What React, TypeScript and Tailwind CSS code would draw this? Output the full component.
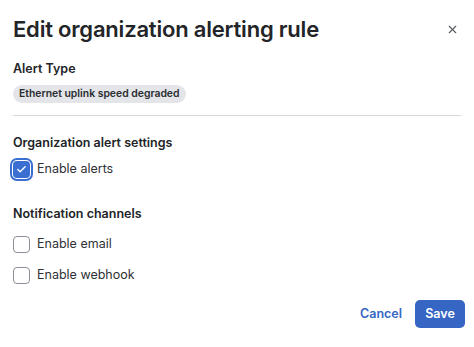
import { Check, X } from 'lucide-react';

const Box = ({ checked, label }: { checked?: boolean; label: string }) => (
  <label className="flex items-center gap-[7px] h-[20px]">
    {checked ? (
      <span className="w-[17px] h-[17px] rounded-[4px] bg-[#3a6fd1] flex items-center justify-center ring-2 ring-[#3a6fd1] ring-offset-1">
        <Check size={11} strokeWidth={3} className="text-white" />
      </span>
    ) : (
      <span className="w-[17px] h-[17px] rounded-[4px] border-[1.5px] border-[#8a8f98] bg-white" />
    )}
    <span className="text-[12.5px] text-[#2f3136]">{label}</span>
  </label>
);

export default function App() {
  return (
    <div className="w-[474px] h-[347px] bg-white px-[13px] relative" style={{ fontFamily: 'Inter, "Noto Sans", sans-serif' }}>
      <div className="flex items-center justify-between pt-[12px] h-[46px]">
        <h1 className="text-[22px] font-semibold text-[#222427] tracking-[-0.2px]">Edit organization alerting rule</h1>
        <X size={13} className="text-[#55585e] mr-[2px]" />
      </div>
      <div className="mt-[14px] text-[12.5px] font-semibold text-[#222427]">Alert Type</div>
      <div className="mt-[4px] inline-flex h-[18px] items-center rounded-full bg-[#e3e5e8] px-[6px] text-[10.4px] font-semibold text-[#2b2d31]">
        Ethernet uplink speed degraded
      </div>
      <div className="mt-[12px] border-t border-[#d5d8dc]" />
      <div className="mt-[18px] text-[12.5px] font-semibold text-[#222427]">Organization alert settings</div>
      <div className="mt-[7px]"><Box checked label="Enable alerts" /></div>
      <div className="mt-[25px] text-[12.5px] font-semibold text-[#222427]">Notification channels</div>
      <div className="mt-[11px] flex flex-col gap-[11px]">
        <Box label="Enable email" />
        <Box label="Enable webhook" />
      </div>
      <div className="absolute right-[9px] top-[300px] flex items-center gap-[13px]">
        <button className="text-[12.5px] font-semibold text-[#3566c4]">Cancel</button>
        <button className="h-[28px] w-[50px] rounded-[5px] bg-[#3566c4] text-white text-[12.5px] font-semibold">Save</button>
      </div>
    </div>
  );
}
